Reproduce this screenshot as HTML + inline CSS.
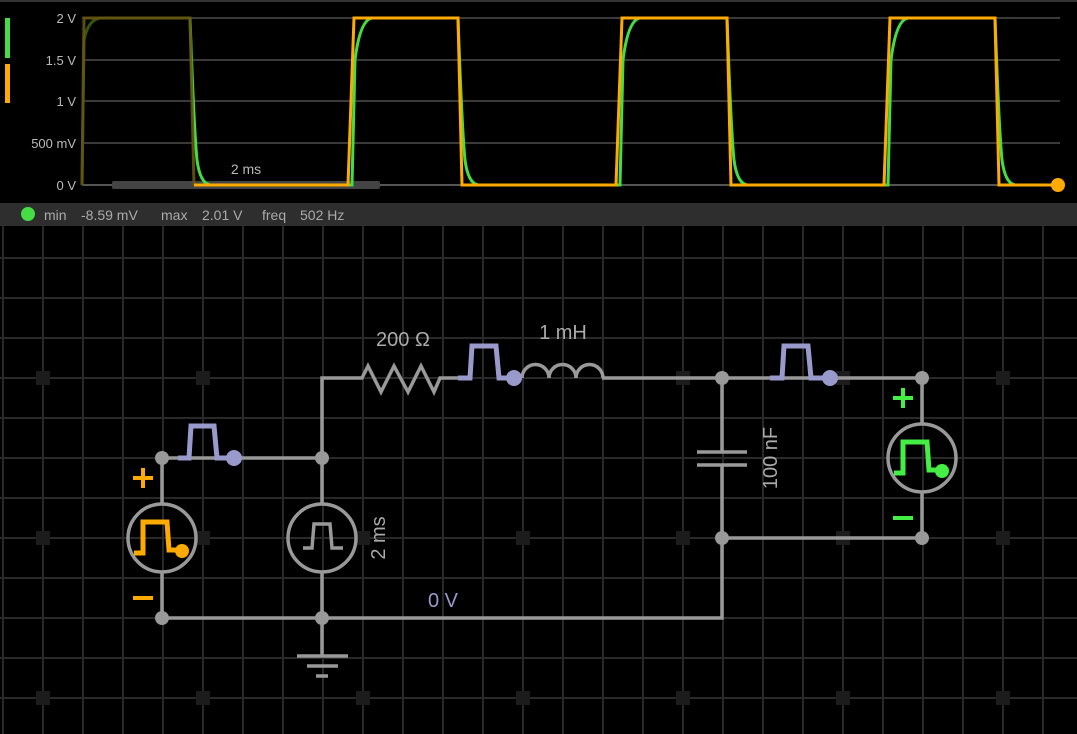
<!DOCTYPE html>
<html><head><style>
html,body{margin:0;padding:0;background:#000;width:1077px;height:734px;overflow:hidden}
svg{display:block}
text{font-family:"Liberation Sans",sans-serif}
</style></head><body>
<svg width="1077" height="734" viewBox="0 0 1077 734">
<rect width="1077" height="734" fill="#000"/>
<rect x="0" y="0" width="1077" height="2" fill="#333"/>
<g stroke="#3a3a3a" stroke-width="2">
<line x1="82" y1="18" x2="1060" y2="18"/><line x1="82" y1="60" x2="1060" y2="60"/>
<line x1="82" y1="101" x2="1060" y2="101"/><line x1="82" y1="143" x2="1060" y2="143"/>
<line x1="82" y1="185" x2="1060" y2="185" stroke="#555"/>
</g>
<g fill="#bbb" font-size="13" text-anchor="end">
<text x="76" y="23">2 V</text><text x="76" y="65">1.5 V</text><text x="76" y="106">1 V</text>
<text x="76" y="148">500 mV</text><text x="76" y="190">0 V</text></g>
<rect x="5" y="18" width="5" height="40" fill="#44dd44"/>
<rect x="5" y="64" width="5" height="39" fill="#ffaa00"/>
<rect x="112" y="181" width="268" height="8" rx="2" fill="#444"/>
<text x="246" y="174" fill="#bbb" font-size="14" text-anchor="middle">2 ms</text>
<g fill="none" stroke-width="3">
<path d="M82 185 L84 40 Q88 20 100 18 L190 18" stroke="#335511"/>
<path d="M190 18 Q194 130 197 160 Q200 183 210 185" stroke="#44dd44"/>
<path d="M82 185 L84 18 L190 18 L194 185" stroke="#665511" opacity="0.9"/>
<path d="M210 185 L352 185 L355 60 Q360 20 372 18 L458 18 Q462 130 465 160 Q468 183 478 185 L620 185 L623 60 Q628 20 640 18 L727 18 Q731 130 734 160 Q737 183 747 185 L888 185 L891 60 Q896 20 908 18 L995 18 Q999 130 1002 160 Q1005 183 1015 185" stroke="#44dd44"/>
<path d="M194 185 L348 185 L354 18 L458 18 L462 185 L616 185 L622 18 L727 18 L731 185 L884 185 L890 18 L995 18 L999 185 L1058 185" stroke="#ffaa00"/>
</g>
<circle cx="1058" cy="185" r="7" fill="#ffaa00"/>
<rect x="0" y="203" width="1077" height="23" fill="#2e2e2e"/>
<circle cx="28" cy="214" r="7" fill="#44dd44"/>
<g fill="#aaa" font-size="14">
<text x="44" y="220">min</text><text x="81" y="220">-8.59 mV</text>
<text x="161" y="220">max</text><text x="202" y="220">2.01 V</text>
<text x="262" y="220">freq</text><text x="300" y="220">502 Hz</text>
</g>
<g stroke="#292929" stroke-width="2">
<line x1="3" y1="226" x2="3" y2="734"/><line x1="43" y1="226" x2="43" y2="734"/><line x1="83" y1="226" x2="83" y2="734"/><line x1="123" y1="226" x2="123" y2="734"/><line x1="163" y1="226" x2="163" y2="734"/><line x1="203" y1="226" x2="203" y2="734"/><line x1="243" y1="226" x2="243" y2="734"/><line x1="283" y1="226" x2="283" y2="734"/><line x1="323" y1="226" x2="323" y2="734"/><line x1="363" y1="226" x2="363" y2="734"/><line x1="403" y1="226" x2="403" y2="734"/><line x1="443" y1="226" x2="443" y2="734"/><line x1="483" y1="226" x2="483" y2="734"/><line x1="523" y1="226" x2="523" y2="734"/><line x1="563" y1="226" x2="563" y2="734"/><line x1="603" y1="226" x2="603" y2="734"/><line x1="643" y1="226" x2="643" y2="734"/><line x1="683" y1="226" x2="683" y2="734"/><line x1="723" y1="226" x2="723" y2="734"/><line x1="763" y1="226" x2="763" y2="734"/><line x1="803" y1="226" x2="803" y2="734"/><line x1="843" y1="226" x2="843" y2="734"/><line x1="883" y1="226" x2="883" y2="734"/><line x1="923" y1="226" x2="923" y2="734"/><line x1="963" y1="226" x2="963" y2="734"/><line x1="1003" y1="226" x2="1003" y2="734"/><line x1="1043" y1="226" x2="1043" y2="734"/>
<line x1="0" y1="258" x2="1077" y2="258"/><line x1="0" y1="298" x2="1077" y2="298"/><line x1="0" y1="338" x2="1077" y2="338"/><line x1="0" y1="378" x2="1077" y2="378"/><line x1="0" y1="418" x2="1077" y2="418"/><line x1="0" y1="458" x2="1077" y2="458"/><line x1="0" y1="498" x2="1077" y2="498"/><line x1="0" y1="538" x2="1077" y2="538"/><line x1="0" y1="578" x2="1077" y2="578"/><line x1="0" y1="618" x2="1077" y2="618"/><line x1="0" y1="658" x2="1077" y2="658"/><line x1="0" y1="698" x2="1077" y2="698"/>
</g>
<g fill="#1c1c1c">
<rect x="36" y="371" width="14" height="14"/><rect x="196" y="371" width="14" height="14"/><rect x="676" y="371" width="14" height="14"/><rect x="836" y="371" width="14" height="14"/><rect x="996" y="371" width="14" height="14"/>
<rect x="36" y="531" width="14" height="14"/><rect x="196" y="531" width="14" height="14"/><rect x="356" y="531" width="14" height="14"/><rect x="516" y="531" width="14" height="14"/><rect x="676" y="531" width="14" height="14"/><rect x="836" y="531" width="14" height="14"/><rect x="996" y="531" width="14" height="14"/>
<rect x="36" y="691" width="14" height="14"/><rect x="196" y="691" width="14" height="14"/><rect x="356" y="691" width="14" height="14"/><rect x="516" y="691" width="14" height="14"/><rect x="676" y="691" width="14" height="14"/><rect x="836" y="691" width="14" height="14"/><rect x="996" y="691" width="14" height="14"/>
</g>
<g fill="none" stroke="#999" stroke-width="3.5">
<path d="M162 458 L322 458 L322 378 L362 378 L368 366 L381 392 L394 366 L408 392 L421 366 L434 392 L440 378 L470 378"/>
<path d="M514 378 L522 378"/>
<path d="M522 378 A13.5 13.5 0 0 1 549 378 A13.5 13.5 0 0 1 576 378 A13.5 13.5 0 0 1 603 378"/>
<path d="M602 378 L922 378 L922 424 M922 492 L922 538 L722 538"/>
<path d="M722 378 L722 452 M697 452 L747 452 M697 465 L747 465 M722 465 L722 618 L162 618 L162 572 M162 504 L162 458"/>
<path d="M322 458 L322 504 M322 572 L322 655 M297 656 L348 656 M307 666 L338 666 M316 676 L328 676"/>
<circle cx="162" cy="538" r="34"/><circle cx="322" cy="538" r="34"/><circle cx="922" cy="458" r="34"/>
<path d="M303 548 L312 548 L314 524 L330 524 L332 548 L343 548"/>
</g>
<g fill="#999">
<circle cx="162" cy="458" r="7"/><circle cx="322" cy="458" r="7"/><circle cx="162" cy="618" r="7"/><circle cx="322" cy="618" r="7"/><circle cx="722" cy="378" r="7"/><circle cx="722" cy="538" r="7"/><circle cx="922" cy="378" r="7"/><circle cx="922" cy="538" r="7"/>
</g>
<g fill="none" stroke="#9999cc" stroke-width="5">
<path d="M178 458 L189 458 L191 426 L214 426 L217 458 L234 458"/>
<path d="M458 378 L470 378 L472 346 L496 346 L499 378 L514 378"/>
<path d="M770 378 L782 378 L784 346 L808 346 L811 378 L830 378"/>
</g>
<g fill="#9999cc"><circle cx="234" cy="458" r="8"/><circle cx="514" cy="378" r="8"/><circle cx="830" cy="378" r="8"/></g>
<path d="M134 553 L143 553 L143 522 L167 522 L169 550 L182 550" fill="none" stroke="#ffaa00" stroke-width="5"/>
<circle cx="182" cy="551" r="7" fill="#ffaa00"/>
<path d="M894 473 L903 473 L903 442 L927 442 L929 470 L942 470" fill="none" stroke="#44ee44" stroke-width="5"/>
<circle cx="942" cy="471" r="7" fill="#44ee44"/>
<g fill="#ffaa00"><rect x="133" y="476" width="20" height="4"/><rect x="141" y="468" width="4" height="20"/><rect x="133" y="596" width="20" height="4"/></g>
<g fill="#44ee44"><rect x="893" y="396" width="20" height="4"/><rect x="901" y="388" width="4" height="20"/><rect x="893" y="516" width="20" height="4"/></g>
<g fill="#aaa" font-size="20">
<text x="403" y="346" text-anchor="middle">200 Ω</text>
<text x="563" y="339" text-anchor="middle">1 mH</text>
<text transform="translate(777,458) rotate(-90)" text-anchor="middle">100 nF</text>
<text transform="translate(385,538) rotate(-90)" text-anchor="middle">2 ms</text>
</g>
<text x="443" y="607" fill="#9999cc" font-size="20" text-anchor="middle">0 V</text>
</svg>
</body></html>
